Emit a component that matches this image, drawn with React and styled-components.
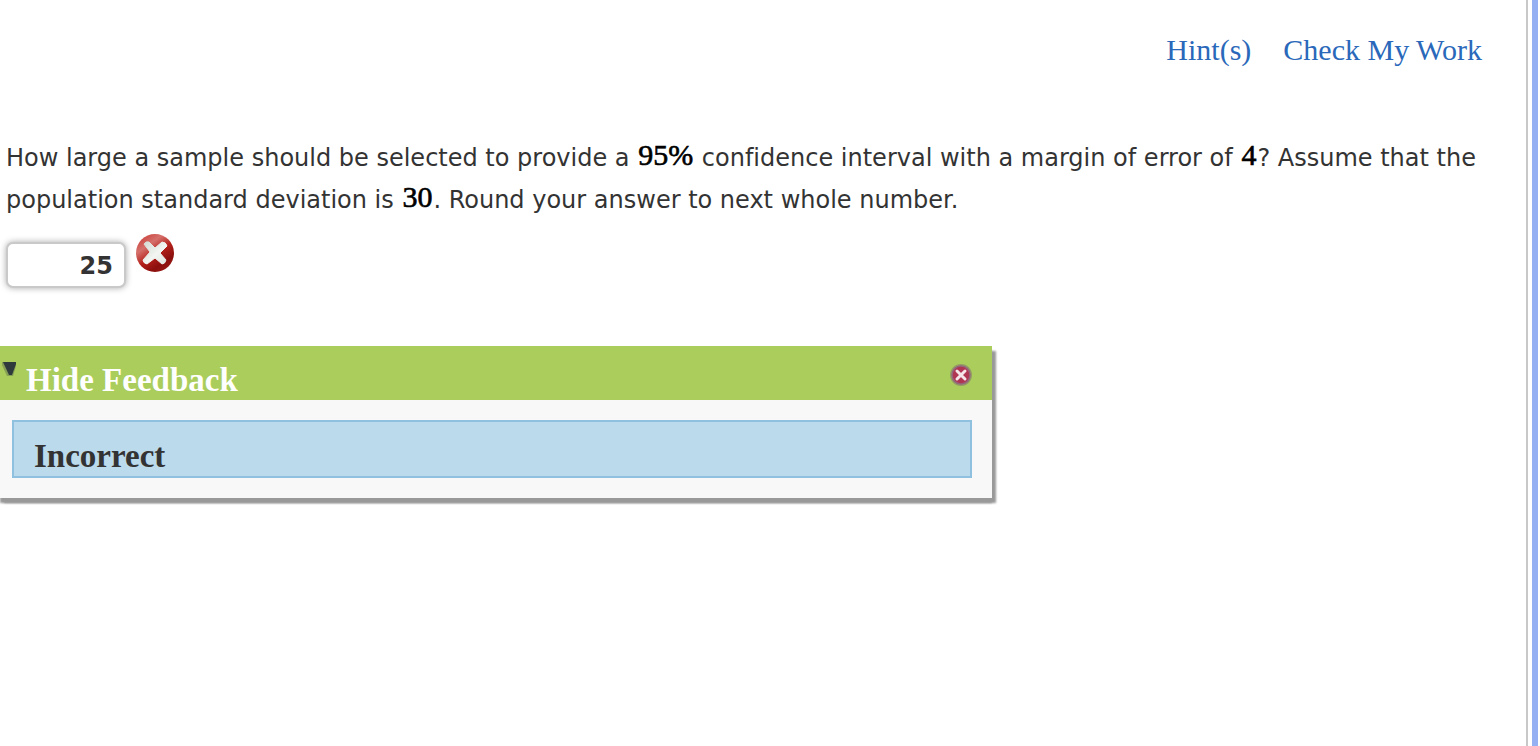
import React, { useState } from "react";
import styled, { createGlobalStyle } from "styled-components";

const GlobalStyle = createGlobalStyle`
  * { box-sizing: border-box; }
  body { margin: 0; background: #fff; }
`;

const serif = `Georgia, "Liberation Serif", serif`;
const sans = `Verdana, "DejaVu Sans", sans-serif`;

const Frame = styled.div`
  min-height: 100vh;
  display: flex;
  padding-right: 2px;
  background: #fff;
`;

const Page = styled.main`
  flex: 1;
  min-width: 0;
  border-right: 2px solid #c8c8c8;
`;

const Rail = styled.div`
  width: 6px;
  margin-left: 4px;
  background: #96b0f4;
`;

const Tools = styled.nav`
  display: flex;
  justify-content: flex-end;
  gap: 32px;
  padding: 32px 44px 0 0;
`;

const ToolLink = styled.a`
  font: 30px/36px ${serif};
  color: #2a68ba;
  text-decoration: none;
`;

const Question = styled.label`
  display: block;
  margin-top: 69px;
  padding: 0 40px 0 6px;
  font: 24px/42px ${sans};
  font-variant-ligatures: none;
  color: #333;
`;

const Figure = styled.span`
  padding: 0 1px;
  font: 30px/1 ${serif};
  vertical-align: 1px;
  -webkit-text-stroke: thin #000;
  color: #000;
`;

const AnswerRow = styled.div`
  display: flex;
  align-items: flex-start;
  gap: 10px;
  margin: 13px 0 0 6px;
`;

const Answer = styled.input`
  width: 120px;
  height: 46px;
  margin-top: 8px;
  padding: 2px 11px 0;
  border: 2px solid #c9c9c9;
  border-radius: 7px;
  box-shadow: 0 0 6px #aaa;
  background: #fff;
  color: #333;
  font: bold 24px/28px ${sans};
  text-align: right;
  outline: none;
`;

const Panel = styled.section`
  width: 65%;
  margin-top: 58px;
  background: #f8f8f8;
  box-shadow: 4px 5px 2px #999, 0 5px 2px #999;
`;

const PanelHeader = styled.header`
  display: flex;
  align-items: flex-start;
  justify-content: space-between;
  height: 54px;
  padding: 16px 20px 0 2px;
  background: #abcd5c;
`;

const Toggle = styled.button`
  display: flex;
  align-items: flex-start;
  gap: 10px;
  padding: 0;
  border: 0;
  background: none;
  color: #fff;
  font: bold 33px/36px ${serif};
  cursor: pointer;
`;

const CloseButton = styled.button`
  display: block;
  padding: 2px 0 0;
  border: 0;
  background: none;
  line-height: 0;
  cursor: pointer;
`;

const PanelBody = styled.div`
  padding: 20px 20px 20px 12px;
`;

const Verdict = styled.p`
  height: 58px;
  margin: 0;
  padding: 16px 20px 0;
  border: 2px solid #8fc0df;
  background: #bbdaeb;
  color: #333;
  font: bold 33px/36px ${serif};
`;

function WrongIcon() {
  return (
    <svg width="38" height="38" viewBox="0 0 38 38" role="img" aria-label="Incorrect answer">
      <defs>
        <linearGradient id="ball" x1="0.1" y1="0" x2="0.8" y2="1">
          <stop offset="0" stopColor="#c93a34" />
          <stop offset="0.3" stopColor="#d5706b" />
          <stop offset="0.55" stopColor="#b5211b" />
          <stop offset="0.8" stopColor="#8b0f0d" />
          <stop offset="1" stopColor="#9c1c18" />
        </linearGradient>
        <linearGradient id="cross" x1="0" y1="0" x2="1" y2="1">
          <stop offset="0" stopColor="#d3dad2" />
          <stop offset="0.55" stopColor="#f2f5f1" />
          <stop offset="1" stopColor="#e2e6e1" />
        </linearGradient>
      </defs>
      <circle cx="19" cy="19" r="19" fill="url(#ball)" />
      <path
        d="M8 10q2-3 5-2l6 6 7-6q4 0 5 4l-7 7 6 7q-1 4-4 4l-7-6-8 6q-4-1-4-4l7-8z"
        fill="url(#cross)"
        stroke="url(#cross)"
        strokeWidth="1"
        strokeLinejoin="round"
      />
    </svg>
  );
}

function Arrow() {
  return (
    <svg width="14" height="14" viewBox="0 0 14 14" aria-hidden="true">
      <path d="M0 0h14v4L11 14H5L0 3z" fill="#6c8050" opacity="0.6" />
      <path d="M1 0h13v2L10 13H7z" fill="#2f3a3c" />
    </svg>
  );
}

function CloseIcon() {
  return (
    <svg width="22" height="22" viewBox="0 0 22 22" aria-hidden="true">
      <circle cx="11" cy="11" r="11" fill="#8c8a68" opacity="0.75" />
      <circle cx="11" cy="11" r="9" fill="#b03552" stroke="#95647a" strokeWidth="1.5" />
      <path d="M7 7l8 8M15 7l-8 8" stroke="#f5e4ea" strokeWidth="3" strokeLinecap="round" />
    </svg>
  );
}

export default function App() {
  const [answer, setAnswer] = useState("25");
  return (
    <Frame>
      <GlobalStyle />
      <Page>
        <Tools>
          <ToolLink href="#hints">Hint(s)</ToolLink>
          <ToolLink href="#check">Check My Work</ToolLink>
        </Tools>
        <Question htmlFor="answer">
          How large a sample should be selected to provide a <Figure>95%</Figure> confidence
          interval with a margin of error of <Figure>4</Figure>? Assume that the population
          standard deviation is <Figure>30</Figure>. Round your answer to next whole number.
        </Question>
        <AnswerRow>
          <Answer id="answer" type="text" value={answer} onChange={(e) => setAnswer(e.target.value)} />
          <WrongIcon />
        </AnswerRow>
        <Panel>
          <PanelHeader>
            <Toggle type="button" aria-expanded="true">
              <Arrow />
              Hide Feedback
            </Toggle>
            <CloseButton type="button" aria-label="Close feedback">
              <CloseIcon />
            </CloseButton>
          </PanelHeader>
          <PanelBody>
            <Verdict>Incorrect</Verdict>
          </PanelBody>
        </Panel>
      </Page>
      <Rail />
    </Frame>
  );
}
